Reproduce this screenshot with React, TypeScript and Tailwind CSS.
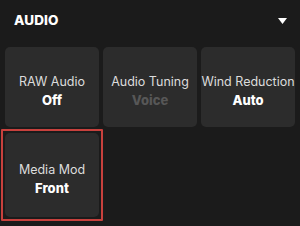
import React from 'react';

interface Setting {
  label: string;
  value: string;
  disabled?: boolean;
  selected?: boolean;
}

const settings: Setting[] = [
  { label: 'RAW Audio', value: 'Off' },
  { label: 'Audio Tuning', value: 'Voice', disabled: true },
  { label: 'Wind Reduction', value: 'Auto' },
  { label: 'Media Mod', value: 'Front', selected: true },
];

const SettingCard: React.FC<{ s: Setting; tall?: boolean }> = ({ s, tall }) => {
  const card = (
    <div
      className={`flex flex-col items-center justify-center pt-[7px] bg-[#2c2c2c] rounded-[5px] ${tall ? 'h-[84px]' : 'h-[80px]'}`}
    >
      <span className="text-[12.5px] leading-[18px] text-[#dcdcdc] whitespace-nowrap">{s.label}</span>
      <span className={`text-[13px] leading-[18px] font-extrabold ${s.disabled ? 'text-[#575757]' : 'text-white'}`}>
        {s.value}
      </span>
    </div>
  );
  // selected tile gets a square red frame that sits outside the card
  if (s.selected) {
    return <div className="-m-[4px] p-[2px] border-2 border-[#c8413d] rounded-[1px]">{card}</div>;
  }
  return card;
};

const App: React.FC = () => {
  return (
    <div className="w-[300px] h-[226px] bg-[#1b1b1b] font-['Inter',sans-serif] overflow-hidden">
      <div className="flex items-center justify-between h-[40px] pl-[14px] pr-[13px]">
        <h1 className="text-[13.5px] font-extrabold text-white tracking-[0.1px]">AUDIO</h1>
        <svg width="9" height="6" viewBox="0 0 9 6" className="mt-[1px]">
          <path d="M0 0 L9 0 L4.5 6 Z" fill="#ffffff" />
        </svg>
      </div>
      <div className="grid grid-cols-3 gap-x-1 gap-y-[6px] px-[5px] pt-[7px]">
        {settings.slice(0, 3).map(s => (
          <SettingCard key={s.label} s={s} />
        ))}
        {settings.slice(3).map(s => (
          <SettingCard key={s.label} s={s} tall />
        ))}
      </div>
    </div>
  );
};

export default App;
